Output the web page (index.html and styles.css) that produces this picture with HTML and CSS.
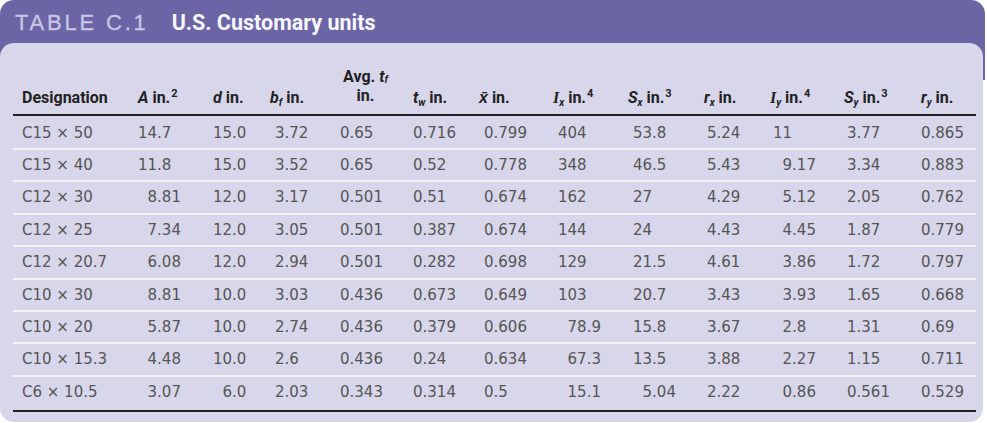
FILE: index.html
```html
<!DOCTYPE html>
<html>
<head>
<meta charset="utf-8">
<link rel="stylesheet" href="styles.css">
</head>
<body>
<div class="card">
  <div class="title"><span class="tag">TABLE C.1</span><span class="name">U.S. Customary units</span></div>
  <div class="panel">
    <table>
      <colgroup>
        <col class="c-des"><col class="c75"><col class="c62"><col class="c65"><col class="c73"><col class="c71"><col class="c74"><col class="c75"><col class="c74"><col class="c66"><col class="c74"><col class="c74"><col class="c55">
      </colgroup>
      <thead>
        <tr>
          <th class="first">Designation</th>
          <th><i>A</i> in.<sup>2</sup></th>
          <th><i>d</i> in.</th>
          <th class="sh"><i>b<sub>f</sub></i> in.</th>
          <th class="two"><span class="l1">Avg. <i>t<sub>f</sub></i></span><span class="l2">in.</span></th>
          <th><i>t<sub>w</sub></i> in.</th>
          <th class="sh"><i>x̄</i> in.</th>
          <th class="sh"><i class="serif">I<sub>x</sub></i> in.<sup>4</sup></th>
          <th class="sh"><i>S<sub>x</sub></i> in.<sup>3</sup></th>
          <th class="sh2"><i>r<sub>x</sub></i> in.</th>
          <th class="sh2"><i class="serif">I<sub>y</sub></i> in.<sup>4</sup></th>
          <th class="sh2"><i>S<sub>y</sub></i> in.<sup>3</sup></th>
          <th><i>r<sub>y</sub></i> in.</th>
        </tr>
      </thead>
      <tbody>
        <tr>
          <td class="first">C15 × 50</td>
          <td><span class="n2">14</span>.7</td><td><span class="n2">15</span>.0</td><td><span class="n1">3</span>.72</td><td><span class="n1">0</span>.65</td><td><span class="n1">0</span>.716</td><td><span class="n1">0</span>.799</td><td><span class="n3">404</span></td><td><span class="n2">53</span>.8</td><td><span class="n1">5</span>.24</td><td><span class="n2">11</span></td><td><span class="n1">3</span>.77</td><td><span class="n1">0</span>.865</td>
        </tr>
        <tr>
          <td class="first">C15 × 40</td>
          <td><span class="n2">11</span>.8</td><td><span class="n2">15</span>.0</td><td><span class="n1">3</span>.52</td><td><span class="n1">0</span>.65</td><td><span class="n1">0</span>.52</td><td><span class="n1">0</span>.778</td><td><span class="n3">348</span></td><td><span class="n2">46</span>.5</td><td><span class="n1">5</span>.43</td><td><span class="n2">9</span>.17</td><td><span class="n1">3</span>.34</td><td><span class="n1">0</span>.883</td>
        </tr>
        <tr>
          <td class="first">C12 × 30</td>
          <td><span class="n2">8</span>.81</td><td><span class="n2">12</span>.0</td><td><span class="n1">3</span>.17</td><td><span class="n1">0</span>.501</td><td><span class="n1">0</span>.51</td><td><span class="n1">0</span>.674</td><td><span class="n3">162</span></td><td><span class="n2">27</span></td><td><span class="n1">4</span>.29</td><td><span class="n2">5</span>.12</td><td><span class="n1">2</span>.05</td><td><span class="n1">0</span>.762</td>
        </tr>
        <tr>
          <td class="first">C12 × 25</td>
          <td><span class="n2">7</span>.34</td><td><span class="n2">12</span>.0</td><td><span class="n1">3</span>.05</td><td><span class="n1">0</span>.501</td><td><span class="n1">0</span>.387</td><td><span class="n1">0</span>.674</td><td><span class="n3">144</span></td><td><span class="n2">24</span></td><td><span class="n1">4</span>.43</td><td><span class="n2">4</span>.45</td><td><span class="n1">1</span>.87</td><td><span class="n1">0</span>.779</td>
        </tr>
        <tr>
          <td class="first">C12 × 20.7</td>
          <td><span class="n2">6</span>.08</td><td><span class="n2">12</span>.0</td><td><span class="n1">2</span>.94</td><td><span class="n1">0</span>.501</td><td><span class="n1">0</span>.282</td><td><span class="n1">0</span>.698</td><td><span class="n3">129</span></td><td><span class="n2">21</span>.5</td><td><span class="n1">4</span>.61</td><td><span class="n2">3</span>.86</td><td><span class="n1">1</span>.72</td><td><span class="n1">0</span>.797</td>
        </tr>
        <tr>
          <td class="first">C10 × 30</td>
          <td><span class="n2">8</span>.81</td><td><span class="n2">10</span>.0</td><td><span class="n1">3</span>.03</td><td><span class="n1">0</span>.436</td><td><span class="n1">0</span>.673</td><td><span class="n1">0</span>.649</td><td><span class="n3">103</span></td><td><span class="n2">20</span>.7</td><td><span class="n1">3</span>.43</td><td><span class="n2">3</span>.93</td><td><span class="n1">1</span>.65</td><td><span class="n1">0</span>.668</td>
        </tr>
        <tr>
          <td class="first">C10 × 20</td>
          <td><span class="n2">5</span>.87</td><td><span class="n2">10</span>.0</td><td><span class="n1">2</span>.74</td><td><span class="n1">0</span>.436</td><td><span class="n1">0</span>.379</td><td><span class="n1">0</span>.606</td><td><span class="n3">78</span>.9</td><td><span class="n2">15</span>.8</td><td><span class="n1">3</span>.67</td><td><span class="n2">2</span>.8</td><td><span class="n1">1</span>.31</td><td><span class="n1">0</span>.69</td>
        </tr>
        <tr>
          <td class="first">C10 × 15.3</td>
          <td><span class="n2">4</span>.48</td><td><span class="n2">10</span>.0</td><td><span class="n1">2</span>.6</td><td><span class="n1">0</span>.436</td><td><span class="n1">0</span>.24</td><td><span class="n1">0</span>.634</td><td><span class="n3">67</span>.3</td><td><span class="n2">13</span>.5</td><td><span class="n1">3</span>.88</td><td><span class="n2">2</span>.27</td><td><span class="n1">1</span>.15</td><td><span class="n1">0</span>.711</td>
        </tr>
        <tr>
          <td class="first">C6 × 10.5</td>
          <td><span class="n2">3</span>.07</td><td><span class="n2">6</span>.0</td><td><span class="n1">2</span>.03</td><td><span class="n1">0</span>.343</td><td><span class="n1">0</span>.314</td><td><span class="n1">0</span>.5</td><td><span class="n3">15</span>.1</td><td><span class="n2">5</span>.04</td><td><span class="n1">2</span>.22</td><td><span class="n2">0</span>.86</td><td><span class="n1">0</span>.561</td><td><span class="n1">0</span>.529</td>
        </tr>
      </tbody>
    </table>
  </div>
</div>
</body>
</html>
```

FILE: styles.css
```css
* { box-sizing: border-box; }

body {
  margin: 0;
  background: #ffffff;
}

.card {
  width: 985px;
  background: linear-gradient(#6b65a5 0, #6b65a5 80px, transparent 80px);
  border-radius: 14px 14px 0 0;
}

.title {
  height: 43px;
  display: flex;
  align-items: baseline;
  padding: 12px 0 0 15px;
}

.tag {
  font-family: "Liberation Sans", Arial, sans-serif;
  font-size: 22px;
  line-height: 22px;
  letter-spacing: 2.8px;
  color: #c9c6e6;
  -webkit-text-stroke: 0.3px #c9c6e6;
}

.name {
  font-family: Roboto, "Liberation Sans", sans-serif;
  font-weight: 700;
  font-size: 21.5px;
  line-height: 22px;
  color: #f6f6fb;
  margin-left: 23px;
}

.panel {
  width: 983px;
  background: #d8d6ea;
  border-radius: 14px;
  padding: 24px 0 10px 13px;
}

table {
  width: 963px;
  table-layout: fixed;
  border-collapse: collapse;
}

.c-des { width: 125px; }
.c75 { width: 75px; }
.c62 { width: 62px; }
.c65 { width: 65px; }
.c73 { width: 73px; }
.c71 { width: 71px; }
.c74 { width: 74px; }
.c66 { width: 66px; }
.c55 { width: 55px; }

th {
  font-family: Roboto, "Liberation Sans", sans-serif;
  font-weight: 700;
  font-size: 16px;
  line-height: 14px;
  color: #222222;
  text-align: left;
  vertical-align: bottom;
  padding: 0 0 8.5px 0;
  border-bottom: 2px solid #222222;
  white-space: nowrap;
}

th i { font-style: italic; }

th .serif {
  font-family: "Liberation Serif", serif;
  font-weight: 700;
}

th .serif sub { font-family: Roboto, sans-serif; }

th sup {
  font-size: 11px;
  line-height: 0;
  vertical-align: 6px;
  margin-left: 1px;
}

th sub {
  font-size: 10px;
  line-height: 0;
  vertical-align: -3px;
}

th.sh { text-indent: -5px; }
th.sh2 { text-indent: -3px; }

th.two {
  text-align: center;
  padding-right: 22px;
  line-height: 19px;
}

th.two .l1,
th.two .l2 {
  display: block;
}

th.two .l1 sub { vertical-align: -1px; }

.first { padding-left: 9px; }

td {
  font-family: "DejaVu Sans", sans-serif;
  font-size: 15px;
  line-height: 30.4px;
  color: #555555;
  padding: 0;
  white-space: nowrap;
}

td.first { padding-left: 9px; }

tbody tr { border-bottom: 2px solid #f3f2fa; }
tbody tr:first-child td { padding-top: 2px; }
tbody tr:last-child { border-bottom: 2px solid #222222; }
tbody tr:last-child td { padding-bottom: 3px; }

.n1, .n2, .n3 {
  display: inline-block;
  text-align: right;
}
.n1 { width: 1ch; }
.n2 { width: 2ch; }
.n3 { width: 3ch; }
```
